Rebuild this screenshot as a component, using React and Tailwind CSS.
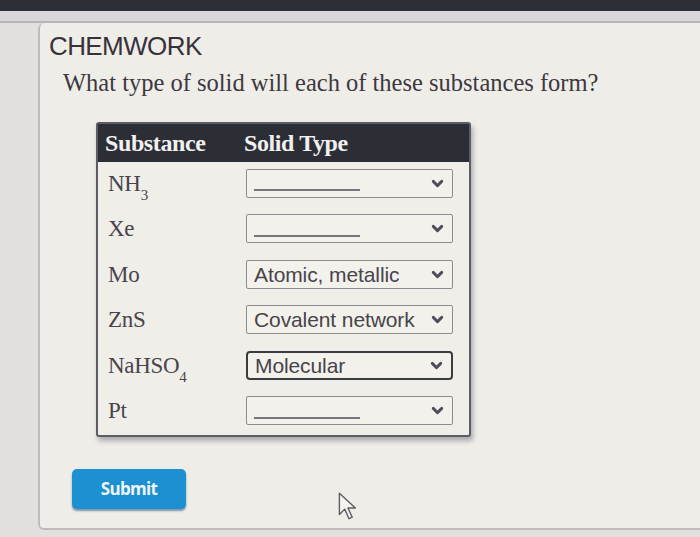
import { ChevronDown } from 'lucide-react'

const rows = [
  { name: <>NH<sub className="text-[15px] align-[-6px]">3</sub></>, value: '' },
  { name: 'Xe', value: '' },
  { name: 'Mo', value: 'Atomic, metallic' },
  { name: 'ZnS', value: 'Covalent network' },
  { name: <>NaHSO<sub className="text-[15px] align-[-6px]">4</sub></>, value: 'Molecular', focused: true },
  { name: 'Pt', value: '' }
]

function FakeSelect({ value, focused }) {
  return (
    <div
      className={`flex items-center h-[29px] w-[207px] bg-[#f3f1ec] pl-[7px] pr-[6px] ${
        focused ? 'border-2 border-[#3b3c40] rounded-[4px]' : 'border border-[#8c8b8f] rounded-[2px]'
      }`}
    >
      <div className="flex-1 min-w-0 text-[21px] leading-none text-[#47444a] font-['Liberation_Sans',Arial,sans-serif] tracking-[-0.1px] whitespace-nowrap">
        {value ? (
          value
        ) : (
          <span className="block w-[106px] mt-[14px] h-[2px] bg-[#77757b]" />
        )}
      </div>
      <ChevronDown size={17} strokeWidth={4} className="text-[#4e4c5a] shrink-0" />
    </div>
  )
}

export default function App() {
  return (
    <div className="w-[700px] h-[537px] overflow-hidden bg-[#d6d3d6] flex flex-col">
      <div className="h-[11px] bg-[#2d2f37] shrink-0" />
      <div className="h-[12px] bg-[#d9d7da] border-b-2 border-[#b7b5bb] shrink-0" />
      <div className="flex flex-1 pl-[38px] pb-[7px] bg-[#e2e0dd]">
        <div className="flex-1 bg-[#eeede8] border-l-2 border-b-2 border-[#bdbbc2] rounded-bl-[6px] rounded-tl-[6px] pt-[10px] pl-[9px]">
          <div className="text-[26px] leading-none text-[#38313a] font-['Liberation_Sans',Arial,sans-serif] tracking-[-0.6px]">
            CHEMWORK
          </div>
          <div className="mt-[12px] ml-[14px] text-[24.5px] leading-none text-[#3d383f] font-['Liberation_Serif','Times_New_Roman',serif]">
            What type of solid will each of these substances form?
          </div>

          <div className="mt-[26px] ml-[47px] w-[375px] bg-[#f0eee9] border-2 border-[#5d5b63] rounded-[3px] shadow-[2px_4px_5px_rgba(90,90,110,0.45)] font-['Liberation_Serif','Times_New_Roman',serif]">
            <div className="flex items-center h-[38px] bg-[#2c2e36] text-[#f1f0f0] text-[24px] font-bold tracking-[-0.4px]">
              <div className="w-[146px] pl-[7px]">Substance</div>
              <div>Solid Type</div>
            </div>
            <div className="flex flex-col gap-[16.5px] pt-[7px] pb-[10px]">
              {rows.map((r, i) => (
                <div key={i} className="flex items-center h-[29px]">
                  <div className="w-[148px] pl-[10px] text-[23px] text-[#48444b] leading-none tracking-[-0.3px]">{r.name}</div>
                  <FakeSelect value={r.value} focused={r.focused} />
                </div>
              ))}
            </div>
          </div>

          <div className="flex items-start mt-[32px] ml-[23px]">
            <button className="w-[114px] h-[40px] rounded-[5px] bg-[#1d90d1] shadow-[0_2px_2px_rgba(20,60,110,0.5)] text-[#eef4f8] text-[17px] font-bold font-['Open_Sans',sans-serif] tracking-[-0.7px]">
              Submit
            </button>
            <svg width="24" height="32" viewBox="0 0 22 30" className="ml-[151px] mt-[22px]">
              <path
                d="M2 2 L2 22 L7 17 L11 26 L14 24.5 L10 16 L17 16 Z"
                fill="#f4f3f0"
                stroke="#5e5c62"
                strokeWidth="1.3"
                strokeLinejoin="round"
              />
            </svg>
          </div>
        </div>
      </div>
    </div>
  )
}
